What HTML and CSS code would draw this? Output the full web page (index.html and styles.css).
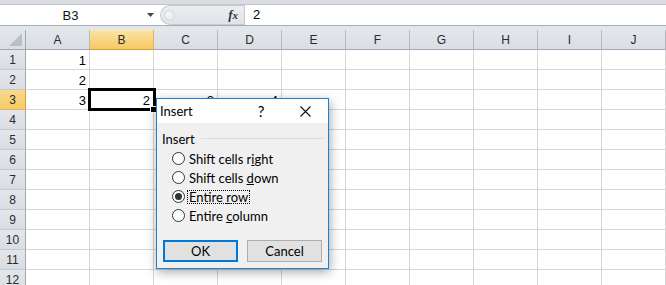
FILE: index.html
```
<!DOCTYPE html>
<html>
<head>
<meta charset="utf-8">
<link rel="stylesheet" href="styles.css">
</head>
<body>
<div class="fbar">
  <div class="fbar-inner">
    <div class="namebox"><span class="nb-text">B3</span><svg class="nb-arrow" width="7" height="4" viewBox="0 0 7 4"><polygon points="0,0 7,0 3.5,4" fill="#444"/></svg></div>
    <div class="pill"><span class="knob"></span><span class="fx">f<span class="fxx">x</span></span></div>
    <div class="formula">2</div>
  </div>
</div>
<div class="sheet">
  <div class="corner"><svg width="13" height="13" viewBox="0 0 13 13"><polygon points="13,0 13,13 0,13" fill="#b9bfc7"/></svg></div>
  <div class="ch">A</div><div class="ch on">B</div><div class="ch">C</div><div class="ch">D</div><div class="ch">E</div><div class="ch">F</div><div class="ch">G</div><div class="ch">H</div><div class="ch">I</div><div class="ch">J</div>

  <div class="rh">1</div><div class="c">1</div><div class="c"></div><div class="c"></div><div class="c"></div><div class="c"></div><div class="c"></div><div class="c"></div><div class="c"></div><div class="c"></div><div class="c"></div>
  <div class="rh">2</div><div class="c">2</div><div class="c"></div><div class="c"></div><div class="c"></div><div class="c"></div><div class="c"></div><div class="c"></div><div class="c"></div><div class="c"></div><div class="c"></div>
  <div class="rh on">3</div><div class="c">3</div><div class="c">2</div><div class="c">3</div><div class="c">4</div><div class="c"></div><div class="c"></div><div class="c"></div><div class="c"></div><div class="c"></div><div class="c"></div>
  <div class="rh">4</div><div class="c"></div><div class="c"></div><div class="c"></div><div class="c"></div><div class="c"></div><div class="c"></div><div class="c"></div><div class="c"></div><div class="c"></div><div class="c"></div>
  <div class="rh">5</div><div class="c"></div><div class="c"></div><div class="c"></div><div class="c"></div><div class="c"></div><div class="c"></div><div class="c"></div><div class="c"></div><div class="c"></div><div class="c"></div>
  <div class="rh">6</div><div class="c"></div><div class="c"></div><div class="c"></div><div class="c"></div><div class="c"></div><div class="c"></div><div class="c"></div><div class="c"></div><div class="c"></div><div class="c"></div>
  <div class="rh">7</div><div class="c"></div><div class="c"></div><div class="c"></div><div class="c"></div><div class="c"></div><div class="c"></div><div class="c"></div><div class="c"></div><div class="c"></div><div class="c"></div>
  <div class="rh">8</div><div class="c"></div><div class="c"></div><div class="c"></div><div class="c"></div><div class="c"></div><div class="c"></div><div class="c"></div><div class="c"></div><div class="c"></div><div class="c"></div>
  <div class="rh">9</div><div class="c"></div><div class="c"></div><div class="c"></div><div class="c"></div><div class="c"></div><div class="c"></div><div class="c"></div><div class="c"></div><div class="c"></div><div class="c"></div>
  <div class="rh">10</div><div class="c"></div><div class="c"></div><div class="c"></div><div class="c"></div><div class="c"></div><div class="c"></div><div class="c"></div><div class="c"></div><div class="c"></div><div class="c"></div>
  <div class="rh">11</div><div class="c"></div><div class="c"></div><div class="c"></div><div class="c"></div><div class="c"></div><div class="c"></div><div class="c"></div><div class="c"></div><div class="c"></div><div class="c"></div>
  <div class="rh">12</div><div class="c"></div><div class="c"></div><div class="c"></div><div class="c"></div><div class="c"></div><div class="c"></div><div class="c"></div><div class="c"></div><div class="c"></div><div class="c"></div>
</div>

<div class="selection"></div>
<div class="fill-handle"></div>

<div class="dlg">
  <div class="dlg-title">
    <span class="dlg-name">Insert</span>
    <span class="dlg-help">?</span>
    <span class="dlg-close"><svg width="11" height="11" viewBox="0 0 11 11"><path d="M0.5 0.5 L10.5 10.5 M10.5 0.5 L0.5 10.5" stroke="#111" stroke-width="1.1" fill="none"/></svg></span>
  </div>
  <div class="dlg-body">
    <div class="grp"><span>Insert</span><span class="rule"></span></div>
    <div class="opts">
      <div class="opt"><span class="radio"></span><span class="lbl">Shift cells r<u>i</u>ght</span></div>
      <div class="opt"><span class="radio"></span><span class="lbl">Shift cells <u>d</u>own</span></div>
      <div class="opt"><span class="radio checked"></span><span class="lbl focus">Entire <u>r</u>ow</span></div>
      <div class="opt"><span class="radio"></span><span class="lbl">Entire <u>c</u>olumn</span></div>
    </div>
    <div class="btns">
      <div class="btn def">OK</div>
      <div class="btn">Cancel</div>
    </div>
  </div>
</div>
</body>
</html>
```
FILE: styles.css
```
* { box-sizing: border-box; }
html, body { margin: 0; padding: 0; }
body {
  width: 666px;
  height: 285px;
  overflow: hidden;
  background: #fff;
  font-family: "Liberation Sans", Arial, sans-serif;
  position: relative;
}

/* formula bar */
.fbar {
  height: 30px;
  padding: 4px 0;
  background: linear-gradient(#d9dce1, #e3e6ea);
}
.fbar-inner {
  height: 22px;
  display: flex;
  background: #fff;
  border-top: 1px solid #c3c7cd;
  border-bottom: 1px solid #a9aeb6;
}
.namebox {
  width: 160px;
  display: flex;
  align-items: center;
}
.nb-text {
  width: 141px;
  text-align: center;
  font-size: 13px;
  color: #111;
}
.nb-arrow { margin-left: 6px; }
.pill {
  width: 84px;
  display: flex;
  align-items: center;
  justify-content: space-between;
  background: linear-gradient(#eceef1, #e0e3e7);
  border: 1px solid #c6cacf;
  border-right: none;
  border-radius: 10px 0 0 10px;
  padding: 0 6px 0 3px;
}
.knob {
  width: 11px;
  height: 11px;
  border-radius: 50%;
  background: radial-gradient(circle at 40% 35%, #f6f7f8, #dfe2e5);
  border: 1px solid #d3d6da;
}
.fx {
  font-family: "Liberation Serif", serif;
  font-style: italic;
  font-weight: bold;
  font-size: 13px;
  color: #333;
}
.fxx { font-size: 11px; }
.formula {
  flex: 1;
  border-left: 1px solid #c6cacf;
  padding-left: 8px;
  font-size: 13px;
  line-height: 20px;
  color: #000;
}

/* sheet */
.sheet {
  display: grid;
  grid-template-columns: 26px repeat(10, 64px);
  grid-auto-rows: 20px;
}
.corner, .ch, .rh {
  background: linear-gradient(#e3e6ea, #dadee3);
  color: #2b2b2b;
  font-size: 12px;
  text-align: center;
  line-height: 20px;
}
.corner {
  border-right: 1px solid #9ea9b6;
  border-bottom: 1px solid #9ea9b6;
  display: flex;
  align-items: flex-end;
  justify-content: flex-end;
  padding: 0 3px 3px 0;
}
.ch {
  border-right: 1px solid #b3bac3;
  border-bottom: 1px solid #9ea9b6;
}
.ch.on {
  background: linear-gradient(#fbe4a6, #f6c862);
  border-right-color: #e3b35a;
  border-bottom-color: #e09a2e;
}
.rh {
  border-right: 1px solid #9ea9b6;
  border-bottom: 1px solid #c3c9d0;
  line-height: 21px;
}
.rh.on {
  background: linear-gradient(#f8d98c, #f5ca68);
  border-right-color: #e09a2e;
  border-bottom-color: #e3b35a;
}
.c {
  border-right: 1px solid #d6d6d6;
  border-bottom: 1px solid #d6d6d6;
  font-size: 13px;
  line-height: 21px;
  text-align: right;
  padding-right: 3px;
  color: #000;
}

/* selection (overlay) */
.selection {
  position: absolute;
  left: 88px;
  top: 88px;
  width: 68px;
  height: 23px;
  border: 3px solid #000;
}
.fill-handle {
  position: absolute;
  left: 150px;
  top: 106px;
  width: 7px;
  height: 7px;
  background: #000;
  border: 1px solid #fff;
}

/* dialog (overlay) */
.dlg {
  position: absolute;
  left: 156px;
  top: 98px;
  width: 173px;
  height: 171px;
  border: 1px solid #1a82d6;
  background: #f0f0f0;
  box-shadow: 1px 3px 10px rgba(0,0,0,0.35);
  font-family: Lato, "Liberation Sans", sans-serif;
  font-size: 13px;
  color: #000;
  display: flex;
  flex-direction: column;
}
.dlg-title {
  height: 24px;
  background: #fff;
  display: flex;
  align-items: center;
}
.dlg-name {
  flex: 1;
  padding-left: 3px;
}
.dlg-help {
  width: 20px;
  text-align: center;
  font-size: 15px;
  margin-right: 12px;
}
.dlg-close {
  width: 45px;
  height: 24px;
  display: flex;
  align-items: center;
  justify-content: center;
}
.dlg-body {
  flex: 1;
  padding: 8px 5px 0 5px;
}
.grp {
  display: flex;
  align-items: center;
  height: 15px;
  gap: 6px;
}
.rule {
  flex: 1;
  height: 1px;
  background: #dcdcdc;
}
.opts {
  margin-top: 3px;
  padding-left: 10px;
}
.opt {
  height: 19px;
  display: flex;
  align-items: center;
}
.radio {
  width: 13px;
  height: 13px;
  border-radius: 50%;
  border: 1px solid #333;
  background: #fff;
  display: flex;
  align-items: center;
  justify-content: center;
}
.radio.checked::after {
  content: "";
  width: 7px;
  height: 7px;
  border-radius: 50%;
  background: #333;
}
.lbl {
  margin-left: 2px;
  padding: 0 1px;
  border: 1px dotted transparent;
  line-height: 12px;
}
.lbl.focus { border-color: #000; }
.btns {
  margin-top: 15px;
  padding-left: 1px;
  display: flex;
  gap: 9px;
}
.btn {
  width: 75px;
  height: 22px;
  background: #e1e1e1;
  border: 1px solid #adadad;
  display: flex;
  align-items: center;
  justify-content: center;
}
.btn.def {
  border: 2px solid #0078d7;
}
```
